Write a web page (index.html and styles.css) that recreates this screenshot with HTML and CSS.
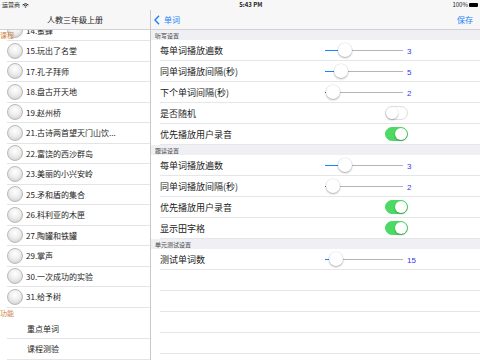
FILE: index.html
```html
<!DOCTYPE html>
<html lang="zh-CN">
<head>
  <meta charset="UTF-8">
  <title>单词设置</title>
  <link rel="stylesheet" href="styles.css">
</head>
<body>
  <div class="status">
    <span class="carrier">运营商
      <svg width="7" height="5" viewBox="0 0 14 10"><path d="M1 4 Q7 -2 13 4" fill="none" stroke="#000" stroke-width="1.6"/><path d="M3.5 6 Q7 2.5 10.5 6" fill="none" stroke="#000" stroke-width="1.6"/><path d="M7 9.5 L5.3 7.8 Q7 6.4 8.7 7.8 Z" fill="#000"/></svg>
    </span>
    <span class="time">5:43 PM</span>
    <span class="battery">100% <i class="batt"></i></span>
  </div>
  <div class="split">
    <div class="master">
      <div class="nav nav-title">人教三年级上册</div>
      <div class="list">
        <span class="sect-label">课程</span>
        <div class="row clipped"><div class="row-in"><i class="dot"></i>14.蜜蜂</div></div>
        <div class="row"><i class="dot"></i>15.玩出了名堂</div>
        <div class="row"><i class="dot"></i>17.孔子拜师</div>
        <div class="row"><i class="dot"></i>18.盘古开天地</div>
        <div class="row"><i class="dot"></i>19.赵州桥</div>
        <div class="row"><i class="dot"></i>21.古诗两首望天门山饮...</div>
        <div class="row"><i class="dot"></i>22.富饶的西沙群岛</div>
        <div class="row"><i class="dot"></i>23.美丽的小兴安岭</div>
        <div class="row"><i class="dot"></i>25.矛和盾的集合</div>
        <div class="row"><i class="dot"></i>26.科利亚的木匣</div>
        <div class="row"><i class="dot"></i>27.陶罐和铁罐</div>
        <div class="row"><i class="dot"></i>29.掌声</div>
        <div class="row"><i class="dot"></i>30.一次成功的实验</div>
        <div class="row"><i class="dot"></i>31.给予树</div>
        <div class="group-head">功能</div>
        <div class="row plain">重点单词</div>
        <div class="row plain">课程测验</div>
      </div>
    </div>
    <div class="detail">
      <div class="nav nav-bar">
        <span class="back">
          <svg width="6" height="10" viewBox="0 0 6 10"><path d="M5 0.8 L1 5 L5 9.2" fill="none" stroke="#1a82fb" stroke-width="1.4"/></svg>
          单词
        </span>
        <span class="save">保存</span>
      </div>

      <div class="sect">听写设置</div>
      <div class="set">
        <span>每单词播放遍数</span>
        <div class="slider"><b class="fill" style="width:20px"></b><b class="thumb" style="left:20px"></b></div>
        <span class="val">3</span>
      </div>
      <div class="set">
        <span>同单词播放间隔(秒)</span>
        <div class="slider"><b class="fill" style="width:16px"></b><b class="thumb" style="left:16px"></b></div>
        <span class="val">5</span>
      </div>
      <div class="set">
        <span>下个单词间隔(秒)</span>
        <div class="slider"><b class="fill" style="width:8px"></b><b class="thumb" style="left:8px"></b></div>
        <span class="val">2</span>
      </div>
      <div class="set">
        <span>是否随机</span>
        <i class="toggle"></i>
      </div>
      <div class="set">
        <span>优先播放用户录音</span>
        <i class="toggle on"></i>
      </div>

      <div class="sect">跟读设置</div>
      <div class="set">
        <span>每单词播放遍数</span>
        <div class="slider"><b class="fill" style="width:20px"></b><b class="thumb" style="left:20px"></b></div>
        <span class="val">3</span>
      </div>
      <div class="set">
        <span>同单词播放间隔(秒)</span>
        <div class="slider"><b class="fill" style="width:8px"></b><b class="thumb" style="left:8px"></b></div>
        <span class="val">2</span>
      </div>
      <div class="set">
        <span>优先播放用户录音</span>
        <i class="toggle on"></i>
      </div>
      <div class="set">
        <span>显示田字格</span>
        <i class="toggle on"></i>
      </div>

      <div class="sect">单元测试设置</div>
      <div class="set">
        <span>测试单词数</span>
        <div class="slider"><b class="fill" style="width:11px"></b><b class="thumb" style="left:11px"></b></div>
        <span class="val">15</span>
      </div>
      <div class="set"></div>
      <div class="set"></div>
      <div class="set"></div>
      <div class="set"></div>
    </div>
  </div>
</body>
</html>
```

FILE: styles.css
```css
body {
  margin: 0;
  width: 480px;
  height: 360px;
  overflow: hidden;
  background: #fff;
  color: #222;
  font-family: "Noto Sans CJK SC", "Noto Sans", sans-serif;
}
.status {
  height: 10px;
  background: #f7f7f7;
  display: flex;
  justify-content: space-between;
  align-items: center;
  padding: 0 2px;
  font-size: 6px;
  line-height: 10px;
}
.carrier {
  display: flex;
  align-items: center;
  gap: 2px;
}
.time {
  font-weight: bold;
  margin-left: 20px;
}
.battery {
  display: flex;
  align-items: center;
  gap: 1px;
}
.batt {
  width: 9px;
  height: 4px;
  background: #000;
  border-radius: 1px;
}
.split {
  display: flex;
  height: 350px;
}
.master {
  width: 150px;
  border-right: 1px solid #c8c7cc;
}
.detail {
  flex: 1;
}
.nav {
  height: 19px;
  background: #f7f7f7;
  border-bottom: 1px solid #d2d2d6;
  font-size: 8px;
}
.nav-title {
  display: flex;
  justify-content: center;
  align-items: center;
}
.nav-bar {
  display: flex;
  justify-content: space-between;
  align-items: center;
  padding: 0 7px 0 3px;
  color: #1a82fb;
}
.back {
  display: flex;
  align-items: center;
  gap: 4px;
}
.list {
  position: relative;
  height: 330px;
  overflow: hidden;
}
.sect-label {
  position: absolute;
  top: 1px;
  left: 0;
  font-size: 7px;
  line-height: 8px;
  color: #d0844a;
}
.row {
  height: 20.5px;
  box-sizing: border-box;
  margin-left: 7px;
  border-bottom: 1px solid #e4e4e6;
  display: flex;
  align-items: center;
  gap: 3px;
  font-size: 8px;
  white-space: nowrap;
}
.row.clipped {
  height: 11px;
  overflow: hidden;
  align-items: flex-end;
}
.row-in {
  height: 19.5px;
  flex-shrink: 0;
  display: flex;
  align-items: center;
  gap: 3px;
}
.row.plain {
  padding-left: 20px;
}
.dot {
  width: 14px;
  height: 14px;
  border-radius: 50%;
  border: 1px solid #b9b9b9;
  background: radial-gradient(circle at 50% 35%, #ffffff 0%, #eeeeee 45%, #c8c8c8 100%);
  flex-shrink: 0;
}
.group-head {
  height: 11px;
  font-size: 7px;
  line-height: 11px;
  color: #d0844a;
}
.sect {
  height: 10px;
  background: #efeff4;
  padding-left: 4px;
  font-size: 6px;
  line-height: 11px;
  color: #444;
}
.set {
  height: 21px;
  box-sizing: border-box;
  margin-left: 9px;
  border-bottom: 1px solid #e6e6e8;
  display: grid;
  grid-template-columns: 165px 78px auto;
  align-items: center;
  font-size: 9px;
}
.slider {
  position: relative;
  height: 14px;
  background: linear-gradient(#b5b5b5, #b5b5b5) 0 50% / 100% 1px no-repeat;
}
.fill {
  position: absolute;
  left: 0;
  top: 6.5px;
  height: 1px;
  background: #1a82fb;
}
.thumb {
  position: absolute;
  top: 0;
  width: 14px;
  height: 14px;
  margin-left: -7px;
  border-radius: 50%;
  background: #fff;
  box-shadow: 0 1px 2px rgba(0, 0, 0, 0.3), 0 0 0 0.5px rgba(0, 0, 0, 0.08);
}
.val {
  margin-left: 4px;
  padding-top: 2px;
  font-size: 8px;
  color: #3535ee;
  font-family: "Liberation Sans", sans-serif;
}
.toggle {
  grid-column: 2;
  justify-self: end;
  margin-right: -5px;
  width: 23px;
  height: 14px;
  box-sizing: border-box;
  border-radius: 7px;
  border: 1px solid #dedede;
  background: #fff;
  display: flex;
  align-items: center;
}
.toggle::after {
  content: "";
  width: 12px;
  height: 12px;
  border-radius: 50%;
  background: #fff;
  box-shadow: 0 1px 2px rgba(0, 0, 0, 0.3);
}
.toggle.on {
  background: #4cd964;
  border-color: #4cd964;
  justify-content: flex-end;
}
```
